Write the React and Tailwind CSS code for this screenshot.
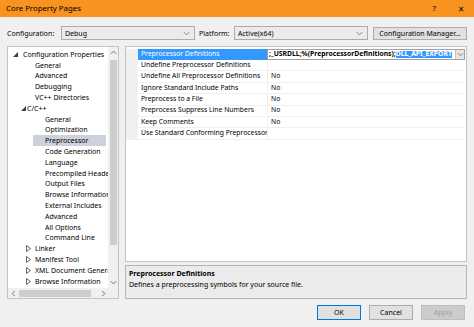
import React from 'react'

const tree = [
  { label: 'Configuration Properties', indent: 'pl-[5px]', arrow: 'open', box: 'w-[10px]' },
  { label: 'General', indent: 'pl-[27px]' },
  { label: 'Advanced', indent: 'pl-[27px]' },
  { label: 'Debugging', indent: 'pl-[27px]' },
  { label: 'VC++ Directories', indent: 'pl-[27px]' },
  { label: 'C/C++', indent: 'pl-[13px]', arrow: 'open', box: 'w-[6px]' },
  { label: 'General', indent: 'pl-[37px]' },
  { label: 'Optimization', indent: 'pl-[37px]' },
  { label: 'Preprocessor', selected: true },
  { label: 'Code Generation', indent: 'pl-[37px]' },
  { label: 'Language', indent: 'pl-[37px]' },
  { label: 'Precompiled Headers', indent: 'pl-[37px]' },
  { label: 'Output Files', indent: 'pl-[37px]' },
  { label: 'Browse Information', indent: 'pl-[37px]' },
  { label: 'External Includes', indent: 'pl-[37px]' },
  { label: 'Advanced', indent: 'pl-[37px]' },
  { label: 'All Options', indent: 'pl-[37px]' },
  { label: 'Command Line', indent: 'pl-[37px]' },
  { label: 'Linker', indent: 'pl-[18px]', arrow: 'closed', box: 'w-[9px]' },
  { label: 'Manifest Tool', indent: 'pl-[18px]', arrow: 'closed', box: 'w-[9px]' },
  { label: 'XML Document Generator', indent: 'pl-[18px]', arrow: 'closed', box: 'w-[9px]' },
  { label: 'Browse Information', indent: 'pl-[18px]', arrow: 'closed', box: 'w-[9px]' },
]

const props = [
  { name: 'Undefine Preprocessor Definitions', value: '' },
  { name: 'Undefine All Preprocessor Definitions', value: 'No' },
  { name: 'Ignore Standard Include Paths', value: 'No' },
  { name: 'Preprocess to a File', value: 'No' },
  { name: 'Preprocess Suppress Line Numbers', value: 'No' },
  { name: 'Keep Comments', value: 'No' },
  { name: 'Use Standard Conforming Preprocessor', value: '' },
]

const Chevron = ({ dir = 'down', className = '' }) => {
  const d = {
    down: 'M1 2.5 L4 5.5 L7 2.5',
    up: 'M1 5.5 L4 2.5 L7 5.5',
    left: 'M5.5 1 L2.5 4 L5.5 7',
    right: 'M2.5 1 L5.5 4 L2.5 7',
  }[dir]
  return (
    <svg width="7" height="7" viewBox="0 0 8 8" className={`shrink-0 ${className}`}>
      <path d={d} fill="none" stroke="currentColor" strokeWidth="1" />
    </svg>
  )
}

const Arrow = ({ type }) =>
  type === 'open' ? (
    <svg width="5" height="5" viewBox="0 0 5 5">
      <polygon points="5,0 5,5 0,5" fill="#404040" />
    </svg>
  ) : (
    <svg width="5" height="7" viewBox="0 0 5 7">
      <polygon points="0.5,0.5 4.5,3.5 0.5,6.5" fill="none" stroke="#505050" strokeWidth="0.9" />
    </svg>
  )

const Dropdown = ({ text, className }) => (
  <div className={`flex items-center justify-between h-[14px] border border-[#acacac] bg-[#ebebeb] pl-[3px] pr-[4px] ${className}`}>
    <span>{text}</span>
    <Chevron className="text-[#707070]" />
  </div>
)

const Button = ({ children, className = '' }) => (
  <div className={`flex items-center justify-center w-[44px] h-[15px] border ${className}`}>{children}</div>
)

export default function App() {
  return (
    <div className="w-[474px] h-[327px] bg-[#f0f0f0] text-[7px] leading-none text-black font-['Segoe_UI','Noto_Sans',sans-serif] whitespace-nowrap overflow-hidden flex flex-col">
      {/* title bar */}
      <div className="h-[17px] bg-[#f7931e] flex items-center pl-[6px] pr-[10px] text-[7.8px]">
        <span className="flex-1">Core Property Pages</span>
        <span className="w-[8px] text-center mr-[20px]">?</span>
        <span className="text-[10px]">×</span>
      </div>

      {/* configuration row */}
      <div className="flex items-center mt-[9px] pl-[7px] h-[14px]">
        <span className="w-[54px]">Configuration:</span>
        <Dropdown text="Debug" className="w-[134px]" />
        <span className="ml-[4px] w-[35px]">Platform:</span>
        <Dropdown text="Active(x64)" className="w-[134px]" />
        <div className="ml-[5px] w-[94px] h-[13px] flex items-center justify-center border border-[#adadad] bg-[#e1e1e1]">
          Configuration Manager...
        </div>
      </div>

      {/* main area */}
      <div className="flex mt-[6px] pl-[7px] h-[253px]">
        {/* tree */}
        <div className="w-[112px] border border-[#c4c4c4] bg-white flex flex-col">
          <div className="flex flex-1 min-h-0">
            <div className="flex-1 min-w-0 pt-[2px] overflow-hidden">
              {tree.map((item, i) =>
                item.selected ? (
                  <div key={i} className="h-[10.8px] flex items-center ml-[25px] mr-[2px] pl-[12px] bg-[#cdd0dd]">
                    {item.label}
                  </div>
                ) : (
                  <div key={i} className={`h-[10.8px] flex items-center ${item.indent}`}>
                    {item.arrow && (
                      <span className={`shrink-0 flex items-center ${item.box}`}>
                        <Arrow type={item.arrow} />
                      </span>
                    )}
                    <span>{item.label}</span>
                  </div>
                )
              )}
            </div>
            <div className="w-[10px] shrink-0 bg-[#f0f0f0] flex flex-col items-center">
              <Chevron dir="up" className="text-[#606060] mt-[2px]" />
              <div className="w-[7px] flex-1 bg-[#cdcdcd] mt-[4px] mb-[34px]" />
              <Chevron dir="down" className="text-[#606060] mb-[2px]" />
            </div>
          </div>
          <div className="h-[10px] shrink-0 flex bg-[#f0f0f0]">
            <div className="flex-1 flex items-center">
              <Chevron dir="left" className="text-[#606060] ml-[2px]" />
              <div className="h-[7px] w-[72px] bg-[#cdcdcd] ml-[2px]" />
              <div className="flex-1" />
              <Chevron dir="right" className="text-[#606060] mr-[1px]" />
            </div>
            <div className="w-[10px] bg-[#f0f0f0]" />
          </div>
        </div>

        {/* grid + description */}
        <div className="ml-[6px] w-[342px] flex flex-col">
          <div className="h-[216px] border border-[#c4c4c4] bg-white pt-[1.6px] pr-[1px] text-[6.8px]">
            <div className="flex h-[11.4px]">
              <div className="w-[12px] shrink-0 bg-[#f0f0f0]" />
              <div className="w-[129px] shrink-0 bg-[#3399ff] text-white flex items-center pl-[3px]">Preprocessor Definitions</div>
              <div className="flex-1 min-w-0 flex items-center border border-[#a0a0a0] bg-white font-bold">
                <span className="pl-[1px] min-w-0 overflow-hidden">;_USRDLL;%(PreprocessorDefinitions);</span>
                <span className="shrink-0 bg-[#3399ff] text-white">DLL_API_EXPORT</span>
                <div className="flex-1" />
                <div className="w-[9px] h-full shrink-0 bg-[#e5e5e5] border-l border-[#c4c4c4] flex items-center justify-center font-normal">
                  <Chevron className="text-[#707070]" />
                </div>
              </div>
            </div>
            {props.map((p, i) => (
              <div key={i} className="flex h-[11.4px]">
                <div className="w-[12px] shrink-0 bg-[#f0f0f0]" />
                <div className="w-[129px] shrink-0 flex items-center pl-[3px] border-b border-[#f0f0f0]">{p.name}</div>
                <div className="flex-1 flex items-center pl-[3px] border-b border-l border-[#f0f0f0]">{p.value}</div>
              </div>
            ))}
          </div>
          <div className="mt-[3px] h-[34px] border border-[#b4b4b4] bg-[#ebebeb] pl-[3px] pt-[4px] flex flex-col gap-[4px]">
            <span className="font-bold">Preprocessor Definitions</span>
            <span>Defines a preprocessing symbols for your source file.</span>
          </div>
        </div>
      </div>

      {/* buttons */}
      <div className="flex justify-end gap-[8px] mt-[6px] pr-[9px]">
        <Button className="border-[#0078d7] bg-[#e1e1e1]">OK</Button>
        <Button className="border-[#adadad] bg-[#e1e1e1]">Cancel</Button>
        <Button className="border-[#bfbfbf] bg-[#cccccc] text-[#a0a0a0]">Apply</Button>
      </div>
    </div>
  )
}
